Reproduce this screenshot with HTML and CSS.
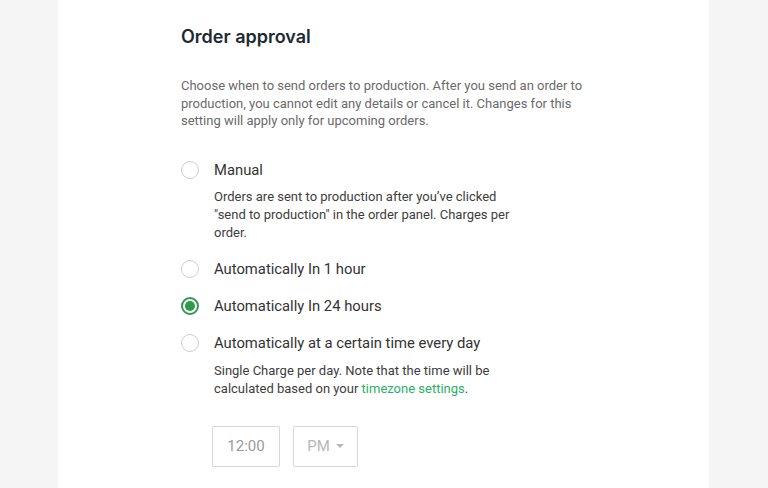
FILE: index.html
```html
<!DOCTYPE html>
<html>
<head>
<meta charset="utf-8">
<link rel="stylesheet" href="styles.css">
</head>
<body>
<div class="panel">
  <div class="content">
    <h1 class="title">Order approval</h1>
    <p class="intro">Choose when to send orders to production. After you send an order to production, you cannot edit any details or cancel it. Changes for this setting will apply only for upcoming orders.</p>
    <div class="options">
      <div class="option">
        <div class="row"><span class="radio"></span><span class="label">Manual</span></div>
        <p class="desc">Orders are sent to production after you’ve clicked "send to production" in the order panel. Charges per order.</p>
      </div>
      <div class="option">
        <div class="row"><span class="radio"></span><span class="label">Automatically In 1 hour</span></div>
      </div>
      <div class="option">
        <div class="row"><span class="radio checked"></span><span class="label">Automatically In 24 hours</span></div>
      </div>
      <div class="option">
        <div class="row"><span class="radio"></span><span class="label">Automatically at a certain time every day</span></div>
        <p class="desc">Single Charge per day. Note that the time will be calculated based on your <a class="link" href="#">timezone settings</a>.</p>
      </div>
    </div>
    <div class="time">
      <div class="box time-box">12:00</div>
      <div class="box ampm-box">PM <span class="caret"></span></div>
    </div>
  </div>
</div>
</body>
</html>
```

FILE: styles.css
```css
html, body {
  margin: 0;
  padding: 0;
  height: 100%;
}
body {
  background: #f5f5f5;
  font-family: Roboto, "Liberation Sans", sans-serif;
  overflow: hidden;
}
.panel {
  margin-left: 58px;
  width: 651px;
  height: 100%;
  background: #ffffff;
}
.content {
  padding: 25px 0 0 123px;
}
.title {
  margin: 0;
  font-family: Inter, "Noto Sans", sans-serif;
  font-weight: 600;
  font-size: 18px;
  line-height: 24px;
  color: #1d2a31;
}
.intro {
  margin: 28px 0 0 0;
  width: 410px;
  font-size: 13px;
  line-height: 17.5px;
  color: #6a6a6a;
}
.options {
  margin-top: 30px;
  display: flex;
  flex-direction: column;
  gap: 17px;
}
.row {
  display: flex;
  align-items: center;
  height: 20px;
}
.radio {
  box-sizing: border-box;
  width: 18px;
  height: 18px;
  border-radius: 50%;
  border: 1.5px solid #cfcfcf;
  margin-right: 15px;
  flex: none;
  position: relative;
}
.radio.checked {
  border: 2px solid #2e9a4e;
  background: #ffffff;
}
.radio.checked::after {
  content: "";
  position: absolute;
  left: 2px;
  top: 2px;
  width: 10px;
  height: 10px;
  border-radius: 50%;
  background: #2e9a4e;
}
.label {
  font-size: 14.8px;
  color: #333333;
}
.desc {
  margin: 8px 0 0 33px;
  width: 300px;
  font-size: 13px;
  line-height: 18px;
  color: #3d3d3d;
}
.option:last-child .desc {
  margin-top: 9px;
}
.link {
  color: #2ab066;
  text-decoration: none;
}
.time {
  display: flex;
  gap: 13px;
  margin: 28px 0 0 31px;
}
.box {
  box-sizing: border-box;
  height: 41px;
  border: 1px solid #d8d8d8;
  border-radius: 2px;
  display: flex;
  align-items: center;
  justify-content: center;
  font-size: 15px;
  color: #9a9a9a;
}
.time-box {
  width: 68px;
}
.ampm-box {
  width: 65px;
  color: #b8b8b8;
  gap: 6px;
}
.caret {
  width: 0;
  height: 0;
  border-left: 4px solid transparent;
  border-right: 4px solid transparent;
  border-top: 4px solid #b8b8b8;
}
```
